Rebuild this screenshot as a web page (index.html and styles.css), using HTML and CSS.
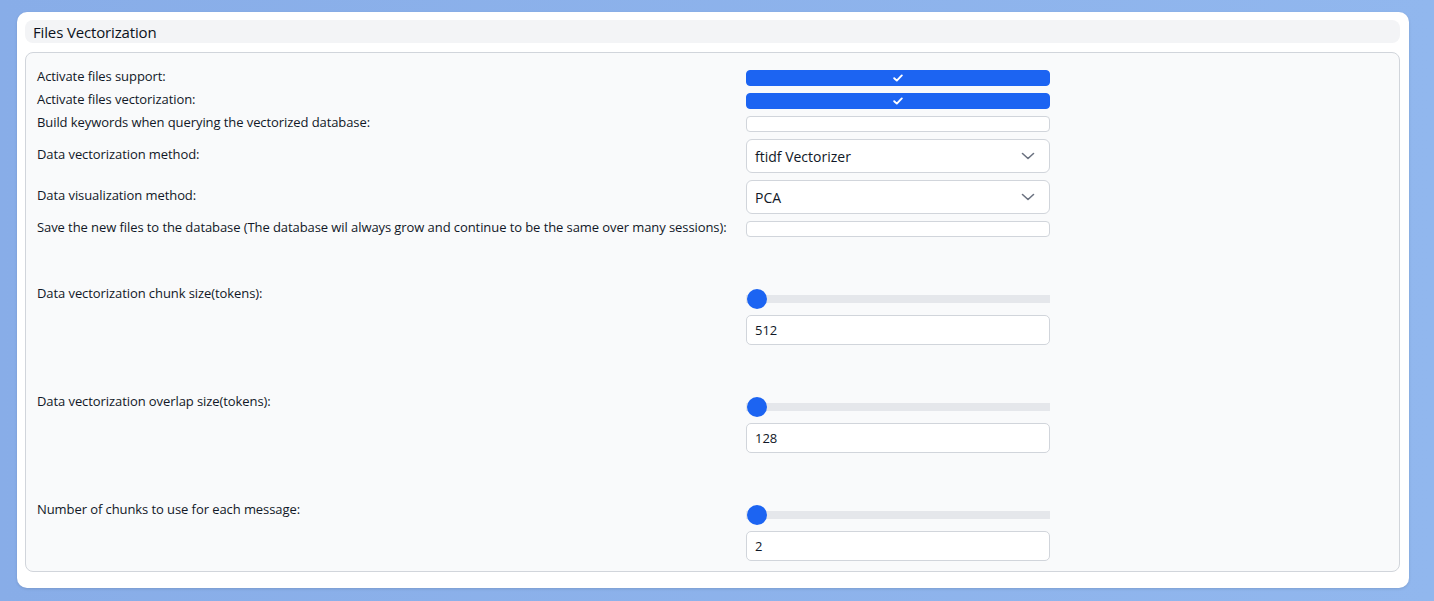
FILE: index.html
```html
<!DOCTYPE html>
<html lang="en">
<head>
<meta charset="utf-8">
<title>Files Vectorization</title>
<link rel="stylesheet" href="styles.css">
</head>
<body>
<div class="card">
  <div class="card-header">Files Vectorization</div>
  <div class="panel">
    <div class="settings">
      <label class="label">Activate files support:</label>
      <div class="control"><div class="check on"><svg width="10" height="8" viewBox="0 0 10 8"><path d="M1.2 4.2 L3.8 6.6 L8.8 1.4" fill="none" stroke="#fff" stroke-width="1.9" stroke-linecap="round" stroke-linejoin="round"/></svg></div></div>

      <label class="label">Activate files vectorization:</label>
      <div class="control"><div class="check on"><svg width="10" height="8" viewBox="0 0 10 8"><path d="M1.2 4.2 L3.8 6.6 L8.8 1.4" fill="none" stroke="#fff" stroke-width="1.9" stroke-linecap="round" stroke-linejoin="round"/></svg></div></div>

      <label class="label">Build keywords when querying the vectorized database:</label>
      <div class="control"><div class="check"></div></div>

      <label class="label">Data vectorization method:</label>
      <div class="control"><div class="select"><span>ftidf Vectorizer</span><svg class="chev" width="14" height="8" viewBox="0 0 14 8"><path d="M1.5 1.5 L7 6.5 L12.5 1.5" fill="none" stroke="#6b7280" stroke-width="1.6" stroke-linecap="round" stroke-linejoin="round"/></svg></div></div>

      <label class="label">Data visualization method:</label>
      <div class="control"><div class="select"><span>PCA</span><svg class="chev" width="14" height="8" viewBox="0 0 14 8"><path d="M1.5 1.5 L7 6.5 L12.5 1.5" fill="none" stroke="#6b7280" stroke-width="1.6" stroke-linecap="round" stroke-linejoin="round"/></svg></div></div>

      <label class="label">Save the new files to the database (The database wil always grow and continue to be the same over many sessions):</label>
      <div class="control"><div class="check"></div></div>

      <label class="label">Data vectorization chunk size(tokens):</label>
      <div class="control slider-cell">
        <div class="range"><div class="thumb"></div></div>
        <div class="num">512</div>
      </div>

      <label class="label">Data vectorization overlap size(tokens):</label>
      <div class="control slider-cell">
        <div class="range"><div class="thumb"></div></div>
        <div class="num">128</div>
      </div>

      <label class="label">Number of chunks to use for each message:</label>
      <div class="control slider-cell">
        <div class="range"><div class="thumb"></div></div>
        <div class="num">2</div>
      </div>
    </div>
  </div>
</div>
</body>
</html>
```

FILE: styles.css
```css
html, body {
  margin: 0;
  padding: 0;
}
body {
  width: 1434px;
  height: 601px;
  overflow: hidden;
  background: linear-gradient(to right, #88ade8, #91b7ee);
  font-family: "Open Sans", "Liberation Sans", sans-serif;
  color: #111827;
  padding: 12px 25px 13px 17px;
  box-sizing: border-box;
}
.card {
  background: #ffffff;
  border-radius: 10px;
  padding: 8px 9px 16px 8px;
  box-shadow: 0 1px 3px rgba(0,0,0,0.12);
  height: 576px;
  box-sizing: border-box;
}
.card-header {
  background: #f3f4f6;
  border-radius: 8px;
  height: 23px;
  line-height: 24px;
  padding-left: 8px;
  font-size: 15px;
  font-weight: 500;
  letter-spacing: -0.15px;
  color: #0b1220;
  margin-bottom: 9px;
}
.panel {
  background: #f9fafb;
  border: 1px solid #d1d5db;
  border-radius: 8px;
  padding: 17px 11px 10px 11px;
}
.settings {
  display: grid;
  grid-template-columns: 709px 304px;
  row-gap: 7px;
  align-items: center;
}
.label {
  font-size: 13px;
  line-height: 16px;
  letter-spacing: -0.08px;
  color: #111827;
  white-space: nowrap;
  margin-top: -2px;
  margin-bottom: 2px;
}
.control {
  display: flex;
  flex-direction: column;
}
.check {
  height: 16px;
  box-sizing: border-box;
  border: 1px solid #d1d5db;
  border-radius: 4px;
  background: #ffffff;
  display: flex;
  align-items: center;
  justify-content: center;
}
.check.on {
  background: #1c64f2;
  border-color: #1c64f2;
}
.select {
  height: 34px;
  box-sizing: border-box;
  border: 1px solid #d1d5db;
  border-radius: 6px;
  background: #ffffff;
  display: flex;
  align-items: center;
  justify-content: space-between;
  padding: 0 14px 0 8px;
  font-size: 14px;
  color: #111827;
}
.slider-cell {
  padding-top: 45px;
  gap: 6px;
}
.range {
  height: 20px;
  display: flex;
  align-items: center;
  background: linear-gradient(#e5e7eb, #e5e7eb) center / 100% 8px no-repeat;
  border-radius: 4px;
}
.thumb {
  width: 20px;
  height: 20px;
  border-radius: 50%;
  background: #1c64f2;
  margin-left: 1px;
}
.num {
  height: 30px;
  box-sizing: border-box;
  border: 1px solid #d1d5db;
  border-radius: 5px;
  background: #ffffff;
  padding-left: 8px;
  font-size: 13px;
  line-height: 28px;
  color: #111827;
}
```
